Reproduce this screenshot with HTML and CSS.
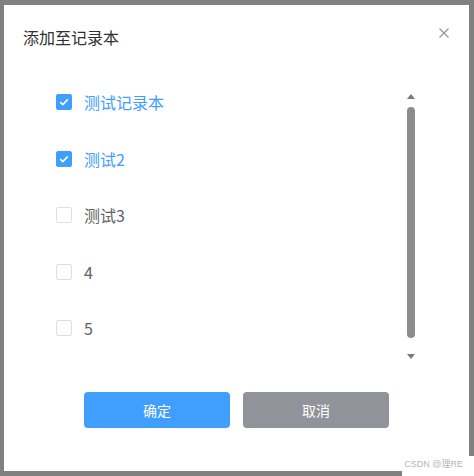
FILE: index.html
```html
<!DOCTYPE html>
<html lang="zh">
<head>
<meta charset="utf-8">
<title>添加至记录本</title>
<link rel="stylesheet" href="styles.css">
</head>
<body>
<div class="dialog">
  <div class="header">
    <span class="title">添加至记录本</span>
    <svg class="close" width="10" height="10" viewBox="0 0 10 10"><path d="M0.5 0.5L9.5 9.5M9.5 0.5L0.5 9.5" stroke="#909399" stroke-width="1.1" fill="none"/></svg>
  </div>
  <div class="body">
    <ul class="list">
      <li class="row checked"><span class="box"><svg width="10" height="8" viewBox="0 0 10 8"><path d="M1.2 4.2L3.8 6.6L8.8 1.4" stroke="#fff" stroke-width="1.6" fill="none"/></svg></span><span class="label">测试记录本</span></li>
      <li class="row checked"><span class="box"><svg width="10" height="8" viewBox="0 0 10 8"><path d="M1.2 4.2L3.8 6.6L8.8 1.4" stroke="#fff" stroke-width="1.6" fill="none"/></svg></span><span class="label">测试2</span></li>
      <li class="row"><span class="box"></span><span class="label">测试3</span></li>
      <li class="row"><span class="box"></span><span class="label">4</span></li>
      <li class="row"><span class="box"></span><span class="label">5</span></li>
    </ul>
    <div class="scrollbar">
      <span class="arrow up"></span>
      <span class="thumb"></span>
      <span class="arrow down"></span>
    </div>
  </div>
  <div class="footer">
    <button class="btn primary">确定</button>
    <button class="btn info">取消</button>
  </div>
</div>
<div class="watermark">CSDN @理RE</div>
</body>
</html>
```
FILE: styles.css
```css
html, body {
  margin: 0;
  padding: 0;
}
body {
  background: #808080;
  width: 474px;
  height: 476px;
  overflow: hidden;
  position: relative;
  font-family: "Noto Sans CJK SC", "Noto Sans", sans-serif;
}
.dialog {
  margin: 5px 0 0 4px;
  width: 465px;
  height: 466px;
  background: #fff;
  box-sizing: border-box;
  display: flex;
  flex-direction: column;
}
.header {
  display: flex;
  align-items: center;
  justify-content: space-between;
  padding: 20px 20px 0 19px;
  height: 24px;
}
.title {
  font-size: 16px;
  line-height: 24px;
  color: #303133;
}
.close {
  display: block;
  margin-top: -8px;
}
.body {
  display: flex;
  padding-top: 25px;
}
.list {
  list-style: none;
  margin: 0;
  padding: 0 0 0 52px;
  flex: 1;
}
.row {
  height: 56.5px;
  display: flex;
  align-items: center;
  gap: 12px;
}
.box {
  width: 16px;
  height: 16px;
  box-sizing: border-box;
  border: 1px solid #dcdfe6;
  border-radius: 2px;
  background: #fff;
  display: flex;
  align-items: center;
  justify-content: center;
}
.checked .box {
  background: #409eff;
  border-color: #409eff;
}
.label {
  font-size: 16px;
  line-height: 20px;
  color: #606266;
}
.checked .label {
  color: #409eff;
}
.scrollbar {
  width: 14px;
  margin-right: 51px;
  margin-top: 20px;
  display: flex;
  flex-direction: column;
  align-items: center;
}
.arrow {
  width: 0;
  height: 0;
  border-left: 4.5px solid transparent;
  border-right: 4.5px solid transparent;
}
.arrow.up {
  border-bottom: 5px solid #7a7a7a;
}
.arrow.down {
  border-top: 5px solid #7a7a7a;
  margin-top: 16px;
}
.thumb {
  width: 8px;
  height: 231px;
  margin-top: 8px;
  border-radius: 4px;
  background: #8c8c8c;
}
.footer {
  display: flex;
  gap: 13px;
  padding-left: 80px;
  margin-top: 33px;
}
.btn {
  width: 146px;
  height: 36px;
  border: none;
  border-radius: 4px;
  color: #fff;
  font-family: "Noto Sans CJK SC", sans-serif;
  font-size: 14px;
  padding: 0;
}
.primary {
  background: #409eff;
}
.info {
  background: #909399;
}
.watermark {
  position: absolute;
  right: 0;
  bottom: 0;
  width: 72px;
  height: 20px;
  background: #fff;
  color: #b5b5b5;
  font-size: 9px;
  line-height: 16px;
  text-align: right;
  padding-right: 11px;
  box-sizing: border-box;
  font-family: "Liberation Sans", "Noto Sans CJK SC", sans-serif;
}
```
